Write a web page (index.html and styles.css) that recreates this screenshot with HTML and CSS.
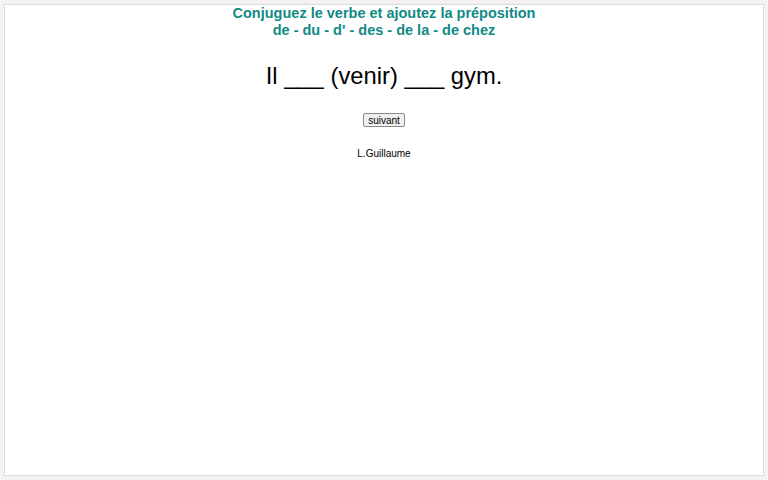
FILE: index.html
```html
<!DOCTYPE html>
<html>
<head>
<meta charset="utf-8">
<link rel="stylesheet" href="styles.css">
</head>
<body>
<div class="page">
  <h1 class="title">Conjuguez le verbe et ajoutez la préposition<br>de - du - d' - des - de la - de chez</h1>
  <p class="sentence">Il ___ (venir) ___ gym.</p>
  <div class="actions"><button class="btn">suivant</button></div>
  <p class="author">L.Guillaume</p>
</div>
</body>
</html>
```
FILE: styles.css
```css
html, body { margin: 0; padding: 0; }
body {
  background: #f2f2f2;
  padding: 4px;
  font-family: "Liberation Sans", Arial, sans-serif;
}
.page {
  background: #fff;
  border: 1px solid #dcdcdc;
  height: 470px;
  text-align: center;
}
.title {
  margin: 0;
  font-size: 14.5px;
  line-height: 17px;
  font-weight: bold;
  color: #108a84;
}
.sentence {
  margin: 22px 0 0;
  font-size: 23.8px;
  line-height: 30px;
  color: #000;
}
.actions {
  margin-top: 22px;
  height: 14px;
  display: flex;
  justify-content: center;
}
.btn {
  font-family: "Liberation Sans", Arial, sans-serif;
  font-size: 10px;
  line-height: 11px;
  padding: 0 4px;
  height: 14px;
  border: 1px solid #8a8a8a;
  border-radius: 2px;
  background: #efefef;
  color: #000;
}
.author {
  margin: 21px 0 0;
  font-size: 10px;
  line-height: 12px;
  color: #000;
}
```
